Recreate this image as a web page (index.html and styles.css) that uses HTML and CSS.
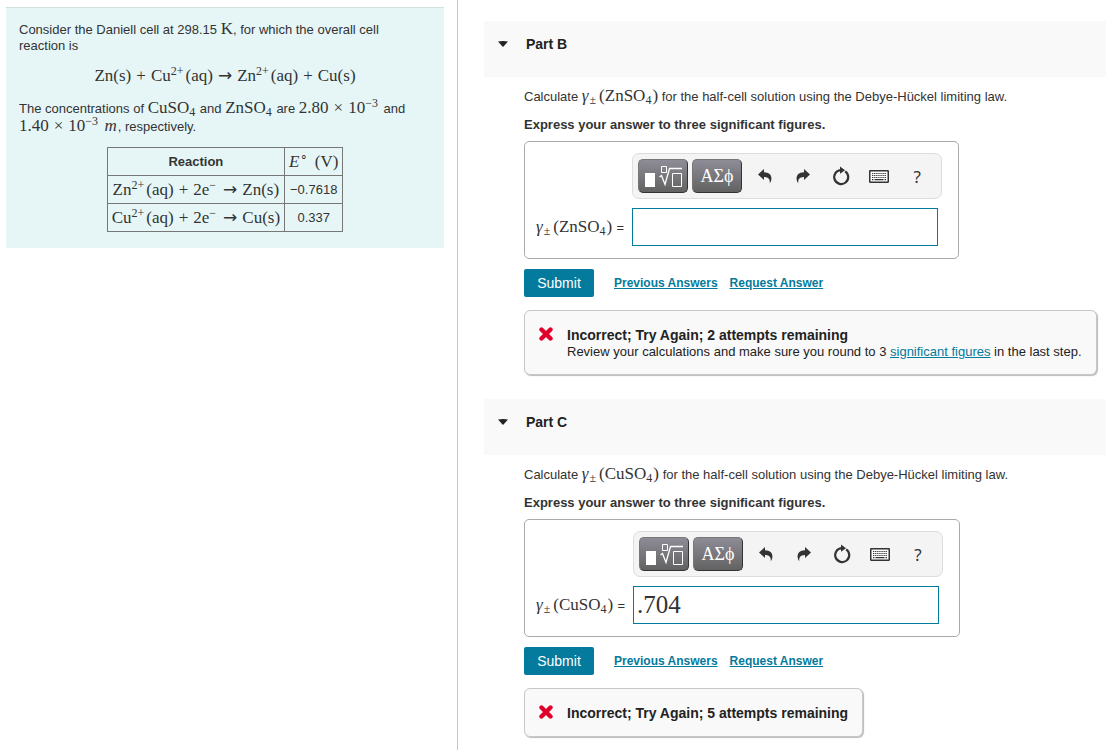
FILE: index.html
```html
<!DOCTYPE html>
<html lang="en">
<head>
<meta charset="utf-8">
<title>Daniell cell</title>
<link rel="stylesheet" href="styles.css">
</head>
<body>
<svg class="defs" width="0" height="0" aria-hidden="true">
  <symbol id="i-undo" viewBox="0 0 16 16"><path d="M1 6.5 7 1v3.200c5.400.2 8 2.900 7.300 7.600-.2 1.500-.8 2.600-1.600 3.600.5-3.700-.9-6.200-5.700-6.300V12z" fill="#333"/></symbol>
  <symbol id="i-redo" viewBox="0 0 16 16"><path d="M15 6.500 9 1v3.200C3.600 4.400 1 7.100 1.700 11.800c.2 1.500.8 2.600 1.600 3.600C2.800 11.700 4.200 9.200 9 9.100V12z" fill="#333"/></symbol>
  <symbol id="i-reset" viewBox="0 0 18 20"><path d="M13.200 5.300A7 7 0 1 1 8.500 4.100" fill="none" stroke="#333" stroke-width="2.200"/><path d="M8 .5 13 4.200 8 7.800z" fill="#333"/></symbol>
  <symbol id="i-keys" viewBox="0 0 20 13"><rect x=".7" y=".7" width="18.600" height="11.600" rx="1" fill="#fff" stroke="#333" stroke-width="1.600"/><path d="M3 3.500h14M3 5.500h14M3 7.500h14" stroke="#333" stroke-width="1.200" stroke-dasharray="1.300 .8"/><path d="M3 9.600h1.500M5.500 9.600h9M15.500 9.600H17" stroke="#333" stroke-width="1.400"/></symbol>
  <symbol id="i-root" viewBox="0 0 40 24"><path d="M2 9h10v14H2z" fill="#fff"/><path d="M16.500 13l2-1.500 3.500 9L26.500 4.500H39" fill="none" stroke="#fff" stroke-width="1.300"/><path d="M18.500 2.500h5v6h-5zM29.500 9.500h9v13h-9z" fill="none" stroke="#fff"/></symbol>
  <symbol id="i-wrong" viewBox="0 0 14 14"><path d="M2.500 2.500l9 9M11.500 2.500l-9 9" stroke="#e0002b" stroke-width="4.400" stroke-linecap="round"/></symbol>
  <symbol id="i-caret" viewBox="0 0 10 6"><path d="M0 .5q5-.8 10 0L5.500 5.600q-.5.400-1 0z" fill="#222"/></symbol>
</svg>
<div class="page">
  <aside class="side">
    <section class="intro">
      <p>Consider the Daniell cell at 298.15 <span class="math">K</span>, for which the overall cell reaction is</p>
      <p class="equation math">Zn(s)<span class="op">+</span>Cu<sup>2+</sup>(aq)<span class="op arrow">→</span>Zn<sup>2+</sup>(aq)<span class="op">+</span>Cu(s)</p>
      <p class="conc">The concentrations of <span class="math">CuSO<sub>4</sub></span> and <span class="math">ZnSO<sub>4</sub></span> are <span class="math">2.80<span class="op">×</span>10<sup>−3</sup></span> and <span class="math">1.40<span class="op">×</span>10<sup>−3</sup> <i>m</i></span>, respectively.</p>
      <table class="data">
        <thead><tr><th scope="col">Reaction</th><th scope="col" class="math"><i>E</i><sup>∘</sup> (V)</th></tr></thead>
        <tbody>
          <tr><td class="math">Zn<sup>2+</sup>(aq)<span class="op">+</span>2e<sup>−</sup><span class="op arrow">→</span>Zn(s)</td><td>−0.7618</td></tr>
          <tr><td class="math">Cu<sup>2+</sup>(aq)<span class="op">+</span>2e<sup>−</sup><span class="op arrow">→</span>Cu(s)</td><td>0.337</td></tr>
        </tbody>
      </table>
    </section>
  </aside>
  <main class="parts">
    <section class="part">
      <button class="part-head" type="button" aria-expanded="true"><svg class="caret"><use href="#i-caret"/></svg>Part B</button>
      <div class="part-body">
        <p class="question">Calculate <span class="math"><i>γ</i><sub>±</sub>(ZnSO<sub>4</sub>)</span> for the half-cell solution using the Debye-Hückel limiting law.</p>
        <p class="hint">Express your answer to three significant figures.</p>
        <div class="answer">
          <div class="toolbar">
            <button class="tool" type="button" aria-label="Templates"><svg class="root"><use href="#i-root"/></svg></button>
            <button class="tool greek" type="button">ΑΣϕ</button>
            <div class="icons">
              <button type="button" aria-label="Undo"><svg class="ic"><use href="#i-undo"/></svg></button>
              <button type="button" aria-label="Redo"><svg class="ic"><use href="#i-redo"/></svg></button>
              <button type="button" aria-label="Reset"><svg class="reset"><use href="#i-reset"/></svg></button>
              <button type="button" aria-label="Keyboard"><svg class="keys"><use href="#i-keys"/></svg></button>
              <button type="button">?</button>
            </div>
          </div>
          <label class="math" for="b"><i>γ</i><sub>±</sub>(ZnSO<sub>4</sub>) <span class="eq">=</span></label>
          <input class="entry" id="b" type="text">
        </div>
        <div class="actions">
          <button class="submit" type="button">Submit</button>
          <a href="#previous">Previous Answers</a>
          <a href="#request">Request Answer</a>
        </div>
        <div class="feedback">
          <svg class="wrong"><use href="#i-wrong"/></svg>
          <div class="message"><strong>Incorrect; Try Again; 2 attempts remaining</strong><p>Review your calculations and make sure you round to 3 <a href="#sigfigs">significant figures</a> in the last step.</p></div>
        </div>
      </div>
    </section>
    <section class="part">
      <button class="part-head" type="button" aria-expanded="true"><svg class="caret"><use href="#i-caret"/></svg>Part C</button>
      <div class="part-body">
        <p class="question">Calculate <span class="math"><i>γ</i><sub>±</sub>(CuSO<sub>4</sub>)</span> for the half-cell solution using the Debye-Hückel limiting law.</p>
        <p class="hint">Express your answer to three significant figures.</p>
        <div class="answer">
          <div class="toolbar">
            <button class="tool" type="button" aria-label="Templates"><svg class="root"><use href="#i-root"/></svg></button>
            <button class="tool greek" type="button">ΑΣϕ</button>
            <div class="icons">
              <button type="button" aria-label="Undo"><svg class="ic"><use href="#i-undo"/></svg></button>
              <button type="button" aria-label="Redo"><svg class="ic"><use href="#i-redo"/></svg></button>
              <button type="button" aria-label="Reset"><svg class="reset"><use href="#i-reset"/></svg></button>
              <button type="button" aria-label="Keyboard"><svg class="keys"><use href="#i-keys"/></svg></button>
              <button type="button">?</button>
            </div>
          </div>
          <label class="math" for="c"><i>γ</i><sub>±</sub>(CuSO<sub>4</sub>) <span class="eq">=</span></label>
          <input class="entry" id="c" type="text" value=".704">
        </div>
        <div class="actions">
          <button class="submit" type="button">Submit</button>
          <a href="#previous">Previous Answers</a>
          <a href="#request">Request Answer</a>
        </div>
        <div class="feedback">
          <svg class="wrong"><use href="#i-wrong"/></svg>
          <div class="message"><strong>Incorrect; Try Again; 5 attempts remaining</strong></div>
        </div>
      </div>
    </section>
  </main>
</div>
</body>
</html>
```
FILE: styles.css
```css
* { box-sizing: border-box; }
body { margin: 0; font: 13px/16px "Liberation Sans", Arial, sans-serif; color: #333; background: #fff; }
p { margin: 0; }
button { font: inherit; color: inherit; border: 0; padding: 0; background: none; }
a { color: #047a9c; }
.defs { position: absolute; }
.page { display: grid; grid-template-columns: 458px 1fr; min-height: 100vh; }
.side { border-right: 1px solid #c7c7c7; padding: 7px 13px 0 6px; }
.intro { background: #e6f6f7; border-top: 1px solid #d0dfe0; padding: 13px 13px 16px; }
.intro p:not(.equation) { padding-right: 22px; }
.math { font-family: "Liberation Serif", "Times New Roman", serif; font-size: 17px; font-weight: 400; line-height: 16px; white-space: nowrap; }
.math sup, .math sub { font-size: 12px; line-height: 0; }
.math sup { vertical-align: 6px; margin-right: 2px; }
.math sub { vertical-align: -3px; margin-right: 1px; }
.math i { margin-right: 1px; }
.math i + sub { margin-right: 3px; }
.op { margin: 0 5px; }
.arrow { font: 17px/1 "DejaVu Sans", sans-serif; line-height: 0; }
.equation { text-align: center; margin: 14px 0 16px; }
.intro .conc { line-height: 18px; }
.data { border-collapse: collapse; margin: 11px auto 0; }
.data th, .data td { border: 1px solid #777; height: 28px; padding: 0 4px; text-align: center; white-space: nowrap; }
.parts { padding: 21px 0 0 26px; min-width: 0; }
.part-head { display: flex; align-items: center; width: 100%; height: 56px; gap: 18px; padding: 0 14px 10px; background: #f9f9f9; font-size: 14px; font-weight: 700; color: #222; }
.caret { width: 10px; height: 6px; }
.part-body { padding: 11px 4px 24px 40px; }
.question { line-height: 16px; }
.hint { font-weight: 700; margin: 12px 0 8px; }
.answer { display: grid; grid-template-columns: auto 310px; column-gap: 8px; row-gap: 9px; align-items: center; width: fit-content; border: 1px solid #aaa; border-radius: 5px; padding: 11px 16px 12px 11px; }
.toolbar { grid-column: 2; display: flex; align-items: center; gap: 4px; height: 46px; padding: 0 5px; background: #f4f4f4; border: 1px solid #ddd; border-radius: 7px; }
.tool { display: flex; align-items: center; justify-content: center; width: 50px; height: 34px; border: 1px solid #333; border-top-color: #777; border-left-color: #777; border-radius: 5px; background: linear-gradient(#8e8c96, #626262); color: #fff; }
.root { width: 40px; height: 24px; }
.greek { font-family: "Liberation Serif", serif; font-size: 18px; }
.icons { display: flex; }
.icons button { display: flex; align-items: center; justify-content: center; width: 38px; height: 34px; font: 17px "Noto Sans", sans-serif; }
.ic { width: 16px; height: 16px; }
.reset { width: 18px; height: 20px; }
.keys { width: 20px; height: 13px; }
.eq { font: 13px "Liberation Sans", Arial, sans-serif; }
.entry { width: 306px; height: 38px; border: 1px solid #047a9c; border-radius: 0; padding: 0 3px; font: 25px "Liberation Serif", serif; color: #333; background: #fff; }
.actions { display: flex; align-items: center; gap: 12px; margin: 10px 0 13px; font-size: 12px; font-weight: 700; }
.submit { width: 70px; height: 28px; margin-right: 8px; border-radius: 2px; background: #047a9c; color: #fff; font-size: 14px; font-weight: 400; }
.feedback { display: flex; gap: 14px; width: fit-content; padding: 15px 14px 14px; border: 1px solid #c7c7c7; border-radius: 6px; box-shadow: 1px 1px 1px #bbb; background: #f9f9f9; color: #222; }
.wrong { width: 14px; height: 14px; margin-top: 1px; flex: none; }
.message strong { display: block; font-size: 14px; line-height: 18px; }
```
